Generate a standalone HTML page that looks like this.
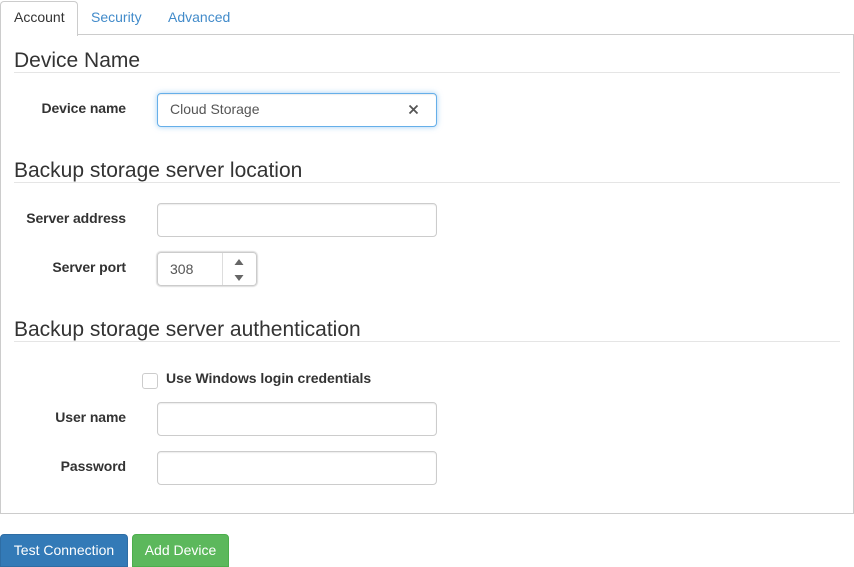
<!DOCTYPE html>
<html><head><meta charset="utf-8">
<style>
html,body{margin:0;padding:0;background:#fff}
body{width:854px;height:567px;position:relative;overflow:hidden;font-family:"Liberation Sans",sans-serif;font-size:14px;color:#333}
.a{position:absolute;white-space:nowrap;line-height:20px}
.panel{position:absolute;left:0;top:34px;width:852px;height:478px;border:1px solid #ccc}
.tab{position:absolute;left:0;top:1px;width:76px;border:1px solid #ccc;border-bottom:0;border-radius:4px 4px 0 0;background:#fff;z-index:2;height:34px}
.link{color:#428bca}
.h{font-size:21px;line-height:22px;color:#333}
.hr{position:absolute;left:14px;width:826px;height:1px;background:#e5e5e5}
.l{font-weight:bold;text-align:right;right:728px;letter-spacing:-.1px}
.in{position:absolute;left:157px;width:278px;height:32px;border:1px solid #ccc;border-radius:4px;background:#fff;box-shadow:inset 0 1px 1px rgba(0,0,0,.075)}
.btn{position:absolute;top:534px;height:33px;border-radius:4px 4px 0 0;color:#fff;line-height:31px;text-align:center;box-sizing:border-box}
</style></head><body>
<div class="panel"></div>
<div class="tab"></div>
<div class="a" style="left:14px;top:7px;color:#333;z-index:3">Account</div>
<div class="a link" style="left:91px;top:7px">Security</div>
<div class="a link" style="left:168px;top:7px">Advanced</div>

<div class="a h" style="left:14px;top:50px">Device Name</div>
<div class="hr" style="top:72px"></div>
<div class="a l" style="top:98px">Device name</div>
<div class="in" style="top:93px;border-color:#66afe9;box-shadow:inset 0 1px 1px rgba(0,0,0,.075),0 0 6px rgba(102,175,233,.6)"></div>
<div class="a" style="left:170px;top:99px;color:#555">Cloud Storage</div>
<svg style="position:absolute;left:408px;top:104px" width="12" height="12" viewBox="0 0 12 12"><path d="M1.500 1.500L9.500 9.500M9.500 1.500L1.500 9.500" stroke="#555" stroke-width="1.800" fill="none"/></svg>

<div class="a h" style="left:14px;top:160px">Backup storage server location</div>
<div class="hr" style="top:182px"></div>
<div class="a l" style="top:208px">Server address</div>
<div class="in" style="top:203px"></div>
<div class="a l" style="top:257px">Server port</div>
<div style="position:absolute;left:157px;top:252px;width:98px;height:32px;border:1px solid #ccc;border-radius:4px;box-shadow:0 0 1px 1px #ddd"></div>
<div style="position:absolute;left:222px;top:253px;width:1px;height:32px;background:#ddd"></div>
<div class="a" style="left:170px;top:259px;color:#555">308</div>
<svg style="position:absolute;left:232px;top:257px" width="14" height="26" viewBox="0 0 14 26"><path d="M2.500 8L7 2L11.500 8Z" fill="#666"/><path d="M2.500 18H11.500L7 24Z" fill="#666"/></svg>

<div class="a h" style="left:14px;top:319px">Backup storage server authentication</div>
<div class="hr" style="top:341px"></div>
<div style="position:absolute;left:142px;top:373px;width:14px;height:14px;border:1px solid #ccc;border-radius:3px;background:#fff"></div>
<div class="a" style="left:166px;top:368px;font-weight:bold;letter-spacing:-.03px">Use Windows login credentials</div>
<div class="a l" style="top:407px">User name</div>
<div class="in" style="top:402px"></div>
<div class="a l" style="top:456px">Password</div>
<div class="in" style="top:451px"></div>

<div class="btn" style="left:0;width:128px;background:#337ab7;border:1px solid #2e6da4">Test Connection</div>
<div class="btn" style="left:132px;width:97px;background:#5cb85c;border:1px solid #4cae4c">Add Device</div>
</body></html>
